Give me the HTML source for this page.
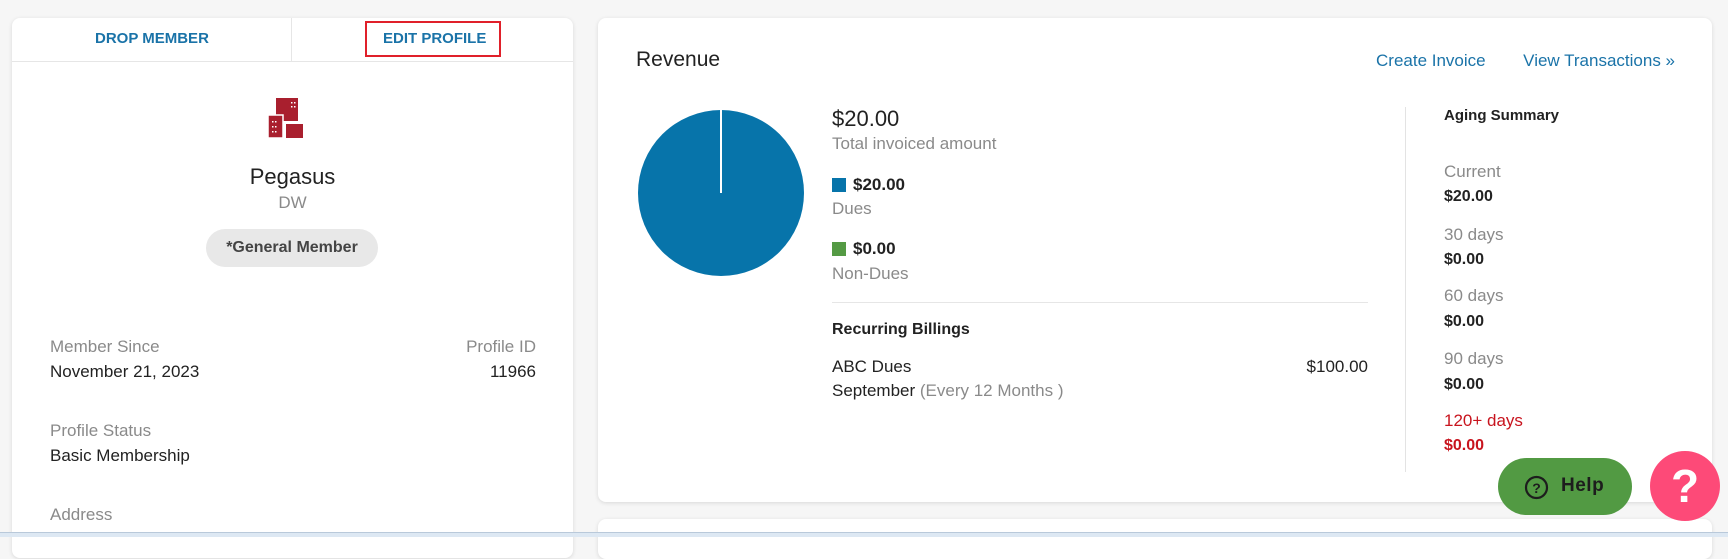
<!DOCTYPE html>
<html><head><meta charset="utf-8"><style>
*{box-sizing:border-box;margin:0;padding:0}
body{width:1728px;height:537px;overflow:hidden;background:#f6f6f6;font-family:"Liberation Sans",Arial,sans-serif;position:relative;color:#222}
.card{position:absolute;background:#fff;border-radius:8px;box-shadow:0 1px 4px rgba(0,0,0,.12)}
.a{position:absolute;white-space:nowrap}
.g{color:#8a8a8a}
.b{font-weight:bold}
.r{font-size:17px}
</style></head><body>
<div class="card" style="left:12px;top:18px;width:561px;height:540px"></div>
<div class="a" style="left:12px;top:61px;width:561px;height:1px;background:#e6e6e6"></div>
<div class="a" style="left:291px;top:18px;width:1px;height:44px;background:#e6e6e6"></div>
<div class="a b" style="left:95px;top:30px;font-size:15px;color:#1a73a8">DROP MEMBER</div>
<div class="a" style="left:365px;top:21px;width:136px;height:36px;border:2px solid #e0202a"></div>
<div class="a b" style="left:383px;top:30px;font-size:15px;color:#1a73a8">EDIT PROFILE</div>
<svg class="a" style="left:266px;top:96px" width="40" height="44" viewBox="266 96 40 44">
<rect x="276" y="98" width="22" height="23" fill="#a91f2e"/>
<rect x="268" y="115" width="15" height="23" fill="#a91f2e" stroke="#fff" stroke-width="1.5"/>
<rect x="286" y="124" width="17" height="14" fill="#a91f2e"/>
<g fill="#fff"><rect x="291" y="102" width="1.5" height="1.5"/><rect x="294" y="102" width="1.5" height="1.5"/><rect x="291" y="106" width="1.5" height="1.5"/><rect x="294" y="106" width="1.5" height="1.5"/>
<rect x="272" y="121" width="1.5" height="1.5"/><rect x="275" y="121" width="1.5" height="1.5"/><rect x="272" y="126" width="1.5" height="1.5"/><rect x="275" y="126" width="1.5" height="1.5"/><rect x="272" y="131" width="1.5" height="1.5"/><rect x="275" y="131" width="1.5" height="1.5"/></g></svg>
<div class="a" style="left:12px;width:561px;text-align:center;top:164px;font-size:22px;color:#222">Pegasus</div>
<div class="a g r" style="left:12px;width:561px;text-align:center;top:193px">DW</div>
<div class="a" style="left:206px;top:229px;width:172px;height:38px;border-radius:19px;background:#e8e8e8;text-align:center;line-height:38px;font-size:16px;font-weight:bold;color:#444">*General Member</div>
<div class="a g r" style="left:50px;top:337px">Member Since</div>
<div class="a r" style="left:50px;top:362px">November 21, 2023</div>
<div class="a g r" style="right:1192px;top:337px">Profile ID</div>
<div class="a r" style="right:1192px;top:362px">11966</div>
<div class="a g r" style="left:50px;top:421px">Profile Status</div>
<div class="a r" style="left:50px;top:446px">Basic Membership</div>
<div class="a g r" style="left:50px;top:505px">Address</div>

<div class="card" style="left:598px;top:18px;width:1114px;height:484px"></div>
<div class="card" style="left:598px;top:519px;width:1114px;height:40px"></div>
<div class="a" style="left:636px;top:48px;font-size:21px;color:#222">Revenue</div>
<div class="a r" style="left:1376px;top:51px;color:#1a73a8">Create Invoice</div>
<div class="a r" style="right:53px;top:51px;color:#1a73a8">View Transactions »</div>
<svg class="a" style="left:637px;top:109px" width="168" height="168"><circle cx="84" cy="84" r="83" fill="#0774aa"/><line x1="84" y1="1" x2="84" y2="84" stroke="#fff" stroke-width="2"/></svg>
<div class="a" style="left:832px;top:106px;font-size:22px;color:#222">$20.00</div>
<div class="a g r" style="left:832px;top:134px">Total invoiced amount</div>
<div class="a" style="left:832px;top:178px;width:14px;height:14px;background:#0774aa"></div>
<div class="a b" style="left:853px;top:175px;font-size:17px">$20.00</div>
<div class="a g r" style="left:832px;top:199px">Dues</div>
<div class="a" style="left:832px;top:242px;width:14px;height:14px;background:#549a44"></div>
<div class="a b" style="left:853px;top:239px;font-size:17px">$0.00</div>
<div class="a g r" style="left:832px;top:264px">Non-Dues</div>
<div class="a" style="left:832px;top:302px;width:536px;height:1px;background:#e6e6e6"></div>
<div class="a b" style="left:832px;top:321px;font-size:16px">Recurring Billings</div>
<div class="a r" style="left:832px;top:357px">ABC Dues</div>
<div class="a r" style="right:360px;top:357px">$100.00</div>
<div class="a r" style="left:832px;top:381px">September <span class="g">(Every 12 Months )</span></div>
<div class="a" style="left:1405px;top:107px;width:1px;height:365px;background:#e3e3e3"></div>
<div class="a b" style="left:1444px;top:107px;font-size:15px">Aging Summary</div>
<div class="a g r" style="left:1444px;top:162px">Current</div>
<div class="a b" style="left:1444px;top:188px;font-size:16px">$20.00</div>
<div class="a g r" style="left:1444px;top:225px">30 days</div>
<div class="a b" style="left:1444px;top:251px;font-size:16px">$0.00</div>
<div class="a g r" style="left:1444px;top:286px">60 days</div>
<div class="a b" style="left:1444px;top:313px;font-size:16px">$0.00</div>
<div class="a g r" style="left:1444px;top:349px">90 days</div>
<div class="a b" style="left:1444px;top:376px;font-size:16px">$0.00</div>
<div class="a r" style="left:1444px;top:411px;color:#c8141e">120+ days</div>
<div class="a b" style="left:1444px;top:437px;font-size:16px;color:#c8141e">$0.00</div>

<div class="a" style="left:1498px;top:458px;width:134px;height:57px;border-radius:29px;background:#529a43"></div>
<svg class="a" style="left:1524px;top:475px" width="25" height="25"><circle cx="12.5" cy="12.5" r="10.5" fill="none" stroke="#1d1d1d" stroke-width="2.2"/><text x="12.5" y="18" text-anchor="middle" font-family="Liberation Sans" font-weight="bold" font-size="14" fill="#1d1d1d">?</text></svg>
<div class="a b" style="left:1561px;top:475px;font-size:19px;color:#1d1d1d;letter-spacing:.5px">Help</div>
<div class="a" style="left:1650px;top:451px;width:70px;height:70px;border-radius:50%;background:#fd4a78;color:#fff;font-size:46px;font-weight:bold;text-align:center;line-height:70px">?</div>
<div class="a" style="left:0;top:532px;width:1728px;height:5px;background:#dde8f3;border-top:1px solid #b9c9da"></div>
</body></html>
